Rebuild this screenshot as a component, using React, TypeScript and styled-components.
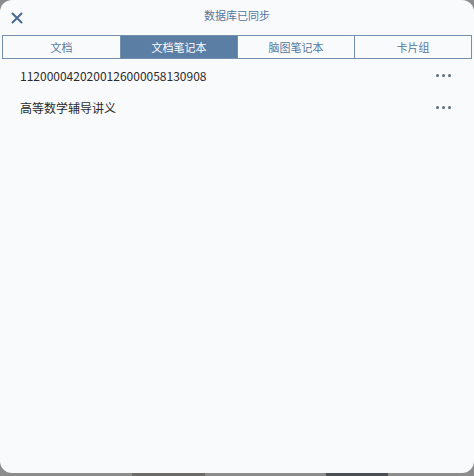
import React, { useState } from "react";
import styled, { createGlobalStyle } from "styled-components";

const GlobalStyle = createGlobalStyle`
  html, body {
    margin: 0;
    padding: 0;
    background: #8c8c8c;
    font-family: "Noto Sans CJK SC", "Liberation Sans", sans-serif;
  }
`;

const tabs = ["文档", "文档笔记本", "脑图笔记本", "卡片组"];
const items = ["1120000420200126000058130908", "高等数学辅导讲义"];

const App = () => {
    const [active, setActive] = useState(1);

    return (
        <>
            <GlobalStyle />
            <Backdrop>
                <Sheet>
                    <Header>
                        <CloseButton aria-label="close">
                            <svg width="12" height="12" viewBox="0 0 12 12">
                                <path d="M1.5 1.5 L10.5 10.5 M10.5 1.5 L1.5 10.5" stroke="#48698f" strokeWidth="2" strokeLinecap="round" />
                            </svg>
                        </CloseButton>
                        <Title>数据库已同步</Title>
                    </Header>
                    <Tabs>
                        {tabs.map((t, i) => (
                            <Tab key={t} $active={i === active} onClick={() => setActive(i)}>
                                {t}
                            </Tab>
                        ))}
                    </Tabs>
                    <List>
                        {items.map((item) => (
                            <Row key={item}>
                                <RowText>{item}</RowText>
                                <More>
                                    <Dot />
                                    <Dot />
                                    <Dot />
                                </More>
                            </Row>
                        ))}
                    </List>
                </Sheet>
                <BottomStrip>
                    <StripSeg $left={132} $width={73} $color="#6e6a6a" />
                    <StripSeg $left={326} $width={62} $color="#4a4d52" />
                </BottomStrip>
            </Backdrop>
        </>
    );
};

const Backdrop = styled.div`
    width: 474px;
    height: 476px;
    position: relative;
    overflow: hidden;
    display: flex;
    flex-direction: column;
`;

const Sheet = styled.div`
    height: 473px;
    background: #f9fafc;
    border-radius: 12px;
    display: flex;
    flex-direction: column;
`;

const Header = styled.div`
    height: 35px;
    position: relative;
    display: flex;
    align-items: center;
    justify-content: center;
`;

const CloseButton = styled.button`
    position: absolute;
    left: 11px;
    top: 12px;
    border: none;
    background: none;
    padding: 0;
    width: 12px;
    height: 12px;
    display: flex;
    cursor: pointer;
`;

const Title = styled.div`
    font-size: 11px;
    color: #52769c;
    margin-top: -5px;
`;

const Tabs = styled.div`
    margin: 0 2px;
    height: 22px;
    border: 1px solid #7590ad;
    display: grid;
    grid-template-columns: repeat(4, 1fr);
`;

const Tab = styled.div<{ $active: boolean }>`
    display: flex;
    align-items: center;
    justify-content: center;
    font-size: 11px;
    color: ${(p) => (p.$active ? "#ffffff" : "#55799f")};
    background: ${(p) => (p.$active ? "#5a7ea4" : "#f9fafc")};
    & + & {
        border-left: 1px solid #7590ad;
    }
    cursor: pointer;
`;

const List = styled.div`
    display: flex;
    flex-direction: column;
`;

const Row = styled.div`
    height: 32px;
    display: flex;
    align-items: center;
    justify-content: space-between;
    padding: 0 23px 0 20px;
`;

const RowText = styled.div`
    font-size: 12px;
    color: #2a2a2a;
`;

const More = styled.div`
    display: flex;
    gap: 3px;
`;

const Dot = styled.span`
    width: 3px;
    height: 3px;
    border-radius: 50%;
    background: #5d6c7c;
`;

const BottomStrip = styled.div`
    flex: 1;
    position: relative;
`;

const StripSeg = styled.div<{ $left: number; $width: number; $color: string }>`
    position: absolute;
    bottom: 0;
    top: 0;
    left: ${(p) => p.$left}px;
    width: ${(p) => p.$width}px;
    background: ${(p) => p.$color};
`;

export default App;
